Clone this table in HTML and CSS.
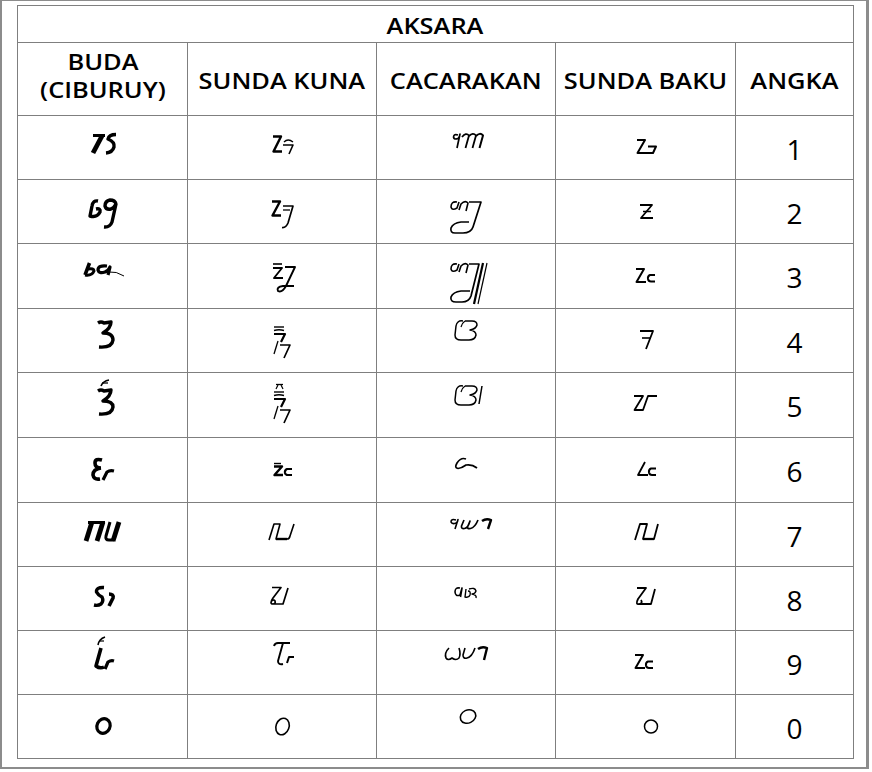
FILE: index.html
```html
<!DOCTYPE html>
<html lang="id">
<head>
<meta charset="utf-8">
<title>Aksara Sunda - Angka</title>
<link rel="stylesheet" href="styles.css">
</head>
<body>
<div class="frame">
<div class="table">
  <div class="cell hd title"><span>AKSARA</span></div>
  <div class="cell hd two"><span>BUDA<br>(CIBURUY)</span></div>
  <div class="cell hd"><span>SUNDA KUNA</span></div>
  <div class="cell hd"><span>CACARAKAN</span></div>
  <div class="cell hd"><span>SUNDA BAKU</span></div>
  <div class="cell hd"><span>ANGKA</span></div>

  <!-- 1 -->
  <div class="cell g"><svg class="gl bold" role="img" aria-label="Buda 1"><path d="M75 19.5 H87" stroke-width="3"/><path d="M84.5 19 L75 37" stroke-width="4.8"/><path d="M98 18.5 Q91 18.5 90 23 Q97 26 96 31 Q94.5 36.5 88 37" stroke-width="3.4"/></svg></div>
  <div class="cell g"><svg class="gl" role="img" aria-label="Sunda Kuna 1"><path d="M85 20.5 H93 L85.5 35.5 H94" stroke-width="2.4"/><path d="M96 26 Q100 22 105 26" stroke-width="1.3"/><path d="M95 29 H105 L101 38" stroke-width="1.6"/></svg></div>
  <div class="cell g"><svg class="gl" role="img" aria-label="Cacarakan 1"><path d="M81 19 Q77 17.5 76.5 21 Q77 24 81 22.5 Q83 21 83 18 L80 32" stroke-width="1.7"/><path d="M85 21 Q89 16 92 19.5 L88.5 32" stroke-width="1.8"/><path d="M92 20 Q96 16 99 19.5 L95.5 32" stroke-width="1.8"/><path d="M99 20 Q103 16 106 19.5 L102.5 32" stroke-width="2"/></svg></div>
  <div class="cell g"><svg class="gl" role="img" aria-label="Sunda Baku 1"><path d="M81 24 H89 L81.5 37 H90" stroke-width="2"/><path d="M92 30.5 H100 L97 37 H90" stroke-width="2"/></svg></div>
  <div class="cell num">1</div>

  <!-- 2 -->
  <div class="cell g"><svg class="gl bold" role="img" aria-label="Buda 2"><path d="M80 21 Q75 20 74 26 L72 36 Q79 38 82 32 Q83 28 78 29" stroke-width="3.4"/><path d="M98 24 Q97 20 92 20 Q87 21 87 26 Q88 30 93 29 Q96 28 98 24 L94 42 Q92 47.5 86 47" stroke-width="3.4"/></svg></div>
  <div class="cell g"><svg class="gl" role="img" aria-label="Sunda Kuna 2"><path d="M84 21.5 H92 L84.5 35.5 H93" stroke-width="2.4"/><path d="M95 26 H105 L100 43 Q98 48 94 47.5" stroke-width="1.7"/><path d="M95 30 H102" stroke-width="1.3"/></svg></div>
  <div class="cell g"><svg class="gl" role="img" aria-label="Cacarakan 2"><path d="M80 22 Q74 21 74 27 Q75 31 80 28 L82 22" stroke-width="1.6"/><path d="M82 30 L84 24 Q88 20 91 23 L89 31" stroke-width="1.6"/><path d="M92 22 H104 L96 47 Q94 53 86 53 H78 Q73 53 74 48 Q76 43 84 42 H92" stroke-width="1.7"/></svg></div>
  <div class="cell g"><svg class="gl" role="img" aria-label="Sunda Baku 2"><path d="M84 25 H96 L85 38 H97" stroke-width="1.8"/><path d="M87 31.5 H95" stroke-width="1.5"/></svg></div>
  <div class="cell num">2</div>

  <!-- 3 -->
  <div class="cell g"><svg class="gl bold" role="img" aria-label="Buda 3"><path d="M71.5 19 L67 31" stroke-width="3.6"/><path d="M67 31 Q74 32 76 27 Q76 24 70 25" stroke-width="3"/><path d="M89 22 Q80 21 80 26 Q81 30 87 28 Q91 26 92 23 L90 31" stroke-width="3.2"/><path d="M91 28 Q98 27 106 32" stroke-width="1"/></svg></div>
  <div class="cell g"><svg class="gl" role="img" aria-label="Sunda Kuna 3"><path d="M85 20 H94" stroke-width="1.6"/><path d="M85 24 H94 L86 34 H95" stroke-width="1.9"/><path d="M97 23 H107 L98 42 Q94 49 90 47 Q88 43 95 42 H106" stroke-width="1.9"/></svg></div>
  <div class="cell g"><svg class="gl" role="img" aria-label="Cacarakan 3"><path d="M80 20 Q74 19 74 25 Q75 29 80 26 L82 20" stroke-width="1.6"/><path d="M82 28 L84 22 Q88 18 91 21 L89 29" stroke-width="1.6"/><path d="M92 20 H102 L94 52 Q92 58 85 58 H79 Q73 58 74 53 Q76 48 84 47 H93" stroke-width="1.7"/><path d="M106 19 L97 60" stroke-width="2.2"/><path d="M110 19 L101 60" stroke-width="1.2"/></svg></div>
  <div class="cell g"><svg class="gl" role="img" aria-label="Sunda Baku 3"><path d="M80 25 H88 L80.5 38 H90" stroke-width="2"/><path d="M99 31 H94 Q91.5 32 92 35 Q92.5 37.5 95 37.5 H99" stroke-width="2"/></svg></div>
  <div class="cell num">3</div>

  <!-- 4 -->
  <div class="cell g"><svg class="gl bold" role="img" aria-label="Buda 4"><path d="M80 14 Q83 12 86 14 L93 13 Q93 19 85 24 Q95 24 95 31 Q94 39 81 38" stroke-width="3.4"/></svg></div>
  <div class="cell g"><svg class="gl" role="img" aria-label="Sunda Kuna 4"><path d="M86 18 H96" stroke-width="1.4"/><path d="M86 21.5 Q91 20 96 21.5" stroke-width="1.4"/><path d="M86 25 H97 L93 33" stroke-width="2.2"/><path d="M90 32 L86 45" stroke-width="1.3"/><path d="M92 36 H102 L96 49" stroke-width="1.7"/></svg></div>
  <div class="cell g"><svg class="gl" role="img" aria-label="Cacarakan 4"><path d="M86 12 Q80 11 79 17 L78 26 Q78 31 84 31 H92 Q98 31 99 26 Q99 22 93 21 Q99 20 100 16 Q100 12 95 12 H88" stroke-width="1.5"/><path d="M88 12 Q85 14 84 18" stroke-width="1.2"/></svg></div>
  <div class="cell g"><svg class="gl" role="img" aria-label="Sunda Baku 4"><path d="M84 22 H97 L90 40" stroke-width="1.8"/><path d="M86 29 H95" stroke-width="1.6"/></svg></div>
  <div class="cell num">4</div>

  <!-- 5 -->
  <div class="cell g"><svg class="gl bold" role="img" aria-label="Buda 5"><path d="M83 13 Q85 8 91 7" stroke-width="1.6"/><path d="M84 10 L90 10" stroke-width="1.3"/><path d="M80 18 Q83 16 86 18 L93 17 Q93 23 85 28 Q95 28 95 34 Q94 42 81 41" stroke-width="3.4"/></svg></div>
  <div class="cell g"><svg class="gl" role="img" aria-label="Sunda Kuna 5"><path d="M88 11.5 H95" stroke-width="1.3"/><path d="M90 12 L88 16 M93 12 L95 16" stroke-width="1.2"/><path d="M86 19 H96" stroke-width="1.4"/><path d="M86 22.5 Q91 21 96 22.5" stroke-width="1.4"/><path d="M86 26 H97 L93 34" stroke-width="2.2"/><path d="M90 33 L86 46" stroke-width="1.3"/><path d="M92 37 H102 L96 50" stroke-width="1.7"/></svg></div>
  <div class="cell g"><svg class="gl" role="img" aria-label="Cacarakan 5"><path d="M86 13 Q80 12 79 18 L78 27 Q78 32 84 32 H92 Q98 32 99 27 Q99 23 93 22 Q99 21 100 17 Q100 13 95 13 H88" stroke-width="1.5"/><path d="M88 13 Q85 15 84 19" stroke-width="1.2"/><path d="M105 13 L102 31" stroke-width="1.5"/></svg></div>
  <div class="cell g"><svg class="gl" role="img" aria-label="Sunda Baku 5"><path d="M78 23 H87 L78.5 37 H87 L92 23 H101" stroke-width="1.8"/></svg></div>
  <div class="cell num">5</div>

  <!-- 6 -->
  <div class="cell g"><svg class="gl bold" role="img" aria-label="Buda 6"><path d="M84 22 Q77 20 77 25 Q77 30 83 30 M83 30 Q75 31 75 37 Q76 42 82 41" stroke-width="3.6"/><path d="M85 42 L89 34 Q92 32 96 33" stroke-width="3.2"/></svg></div>
  <div class="cell g"><svg class="gl" role="img" aria-label="Sunda Kuna 6"><path d="M86 25.5 H93" stroke-width="1.4"/><path d="M86 28.5 H94 L86.5 37 H95" stroke-width="2.4"/><path d="M104 31 H99 Q96.5 32 97 35 Q97.5 37 100 37 H104" stroke-width="2.2"/></svg></div>
  <div class="cell g"><svg class="gl" role="img" aria-label="Cacarakan 6"><path d="M89 21 Q84 19 80 25 Q77 30 81 30.5 Q85 30 89 27 Q95 26 100 30" stroke-width="1.7"/></svg></div>
  <div class="cell g"><svg class="gl" role="img" aria-label="Sunda Baku 6"><path d="M89 24 L82 37 H92" stroke-width="1.8"/><path d="M100 30.5 H95 Q92.5 31.5 93 34.5 Q93.5 37 96 37 H100" stroke-width="2"/></svg></div>
  <div class="cell num">6</div>

  <!-- 7 -->
  <div class="cell g"><svg class="gl bold" role="img" aria-label="Buda 7"><path d="M70 19.5 H87" stroke-width="3"/><path d="M74 19 L68 38" stroke-width="4.8"/><path d="M85 19 L79 38" stroke-width="4.8"/><path d="M92 19 L88 33 Q87 37 91 37 H96" stroke-width="3"/><path d="M101 19 L95 38" stroke-width="4.8"/></svg></div>
  <div class="cell g"><svg class="gl" role="img" aria-label="Sunda Kuna 7"><path d="M81 37 L86 21 H92 L88 36 H99 Q101.5 36 102 33 L106 21" stroke-width="1.6"/><path d="M88 36 H99" stroke-width="2.4"/></svg></div>
  <div class="cell g"><svg class="gl" role="img" aria-label="Cacarakan 7"><path d="M79 17 Q74 15.5 74 19 Q75 21.5 79 20 Q81 19 81 16.5 L78 26" stroke-width="1.6"/><path d="M87 17 L84.5 23 Q84 26 87.5 25.5 Q91 25 93 18 L90.5 24 Q90 26 93.5 25.5 Q98 24.5 101 17" stroke-width="1.7"/><path d="M105 18 Q109 15 114 17 L111 26" stroke-width="2.4"/></svg></div>
  <div class="cell g"><svg class="gl" role="img" aria-label="Sunda Baku 7"><path d="M79 37 L84 21 H91 L87 36 H98 L102 21" stroke-width="1.8"/><path d="M87 36 H98" stroke-width="2.3"/></svg></div>
  <div class="cell num">7</div>

  <!-- 8 -->
  <div class="cell g"><svg class="gl bold" role="img" aria-label="Buda 8"><path d="M86 20.5 Q78 20 78.5 25 Q80 28 84 30 Q86 34 83 37 Q80 39 76 38" stroke-width="3.4"/><path d="M91 27 Q96 27 95 31 L91 39" stroke-width="3.6"/></svg></div>
  <div class="cell g"><svg class="gl" role="img" aria-label="Sunda Kuna 8"><path d="M84 20.5 H93 L85 31 Q81 37 85 37 Q88 36.5 87 34 Q86 32 84 34 M85 37 H95 L100 21" stroke-width="1.7"/></svg></div>
  <div class="cell g"><svg class="gl" role="img" aria-label="Cacarakan 8"><path d="M83 21 Q78 20 78 25 Q78.5 30 83 28 L85 21 L83.5 30" stroke-width="1.6"/><path d="M89 22 L88 30 Q92 31 93 28 Q94 24 91 24 M92 22 Q98 20 99 24 Q98 27 95 27 Q100 28 99 31" stroke-width="1.4"/></svg></div>
  <div class="cell g"><svg class="gl" role="img" aria-label="Sunda Baku 8"><path d="M81 21 H90 L82 32 Q79 38 83.5 37 Q87 36 85 33 M83.5 37 H95 L99 22" stroke-width="1.8"/></svg></div>
  <div class="cell num">8</div>

  <!-- 9 -->
  <div class="cell g"><svg class="gl bold" role="img" aria-label="Buda 9"><path d="M80 14 Q81 8 87 6" stroke-width="1.6"/><path d="M82 10 L86 10" stroke-width="1.2"/><path d="M83 17 L78 35 Q82 38 86 36" stroke-width="3.6"/><path d="M87 38 L90 31 Q93 29 96 30" stroke-width="3.2"/></svg></div>
  <div class="cell g"><svg class="gl" role="img" aria-label="Sunda Kuna 9"><path d="M86 15 Q87 11.5 91 12 H102" stroke-width="1.9"/><path d="M95 12 L90 30 Q90 34 95 33" stroke-width="1.9"/><path d="M99 32 L101 26 H106" stroke-width="2"/></svg></div>
  <div class="cell g"><svg class="gl" role="img" aria-label="Cacarakan 9"><path d="M72 17 Q67 22 69 27 Q71 30 75 27 Q79 30 82 27 Q84 23 82 17" stroke-width="1.6"/><path d="M88 17 L86 24 Q86 28 90 27 Q95 26 98 17" stroke-width="1.6"/><path d="M101 18 Q105 15 110 17 L107 29" stroke-width="2.4"/></svg></div>
  <div class="cell g"><svg class="gl" role="img" aria-label="Sunda Baku 9"><path d="M79 24 H87 L79.5 37 H89" stroke-width="2"/><path d="M97 30.5 H92 Q89.5 31.5 90 34.5 Q90.5 37 93 37 H97" stroke-width="2"/></svg></div>
  <div class="cell num">9</div>

  <!-- 0 -->
  <div class="cell g"><svg class="gl bold" role="img" aria-label="Buda 0"><ellipse cx="85.5" cy="31" rx="6.5" ry="7.5" transform="rotate(25 85.5 31)" stroke-width="3.2"/></svg></div>
  <div class="cell g"><svg class="gl" role="img" aria-label="Sunda Kuna 0"><ellipse cx="94.5" cy="31.5" rx="6.5" ry="8.5" transform="rotate(20 94.5 31.5)" stroke-width="1.6"/></svg></div>
  <div class="cell g"><svg class="gl" role="img" aria-label="Cacarakan 0"><ellipse cx="91" cy="21.5" rx="8" ry="6.5" transform="rotate(-25 91 21.5)" stroke-width="1.6"/></svg></div>
  <div class="cell g"><svg class="gl" role="img" aria-label="Sunda Baku 0"><circle cx="95" cy="31.5" r="6.5" stroke-width="1.5"/></svg></div>
  <div class="cell num">0</div>
</div>
</div>
</body>
</html>
```
FILE: styles.css
```css
html, body {
  margin: 0;
  padding: 0;
  background: #ffffff;
}

.frame {
  box-sizing: border-box;
  width: 869px;
  height: 769px;
  border: 1px solid #8c8c8c;
  border-left-width: 2px;
  border-right-width: 3px;
  border-bottom-width: 2px;
  padding: 4px 0 0 15px;
}

.table {
  display: grid;
  grid-template-columns: 169px 188px 178px 179px 117px;
  grid-template-rows: 36px 72px 63px 63px 64px 63px 64px 64px 63px 63px 63px 63px;
  gap: 1px;
  padding: 1px;
  background: #7f7f7f;
  width: max-content;
}

.cell {
  background: #ffffff;
  display: flex;
  align-items: center;
  justify-content: center;
  overflow: hidden;
  color: #000000;
}

.title {
  grid-column: 1 / -1;
}

.hd {
  font-family: "Open Sans", "Liberation Sans", sans-serif;
  font-weight: 600;
  font-size: 21px;
  line-height: 28px;
  text-align: center;
  padding-top: 3px;
}

.hd span {
  display: inline-block;
  transform: scaleX(1.21);
}

.hd.two {
  padding-top: 0;
  padding-bottom: 6px;
}

.num {
  font-family: "Open Sans", "Liberation Sans", sans-serif;
  font-weight: 400;
  font-size: 28px;
  line-height: 28px;
  padding-top: 2px;
}

.g {
  display: block;
}

.gl {
  display: block;
  width: 100%;
  height: 100%;
}

.gl path,
.gl ellipse,
.gl circle {
  fill: none;
  stroke: #000000;
  stroke-linejoin: round;
  stroke-linecap: butt;
}
```
